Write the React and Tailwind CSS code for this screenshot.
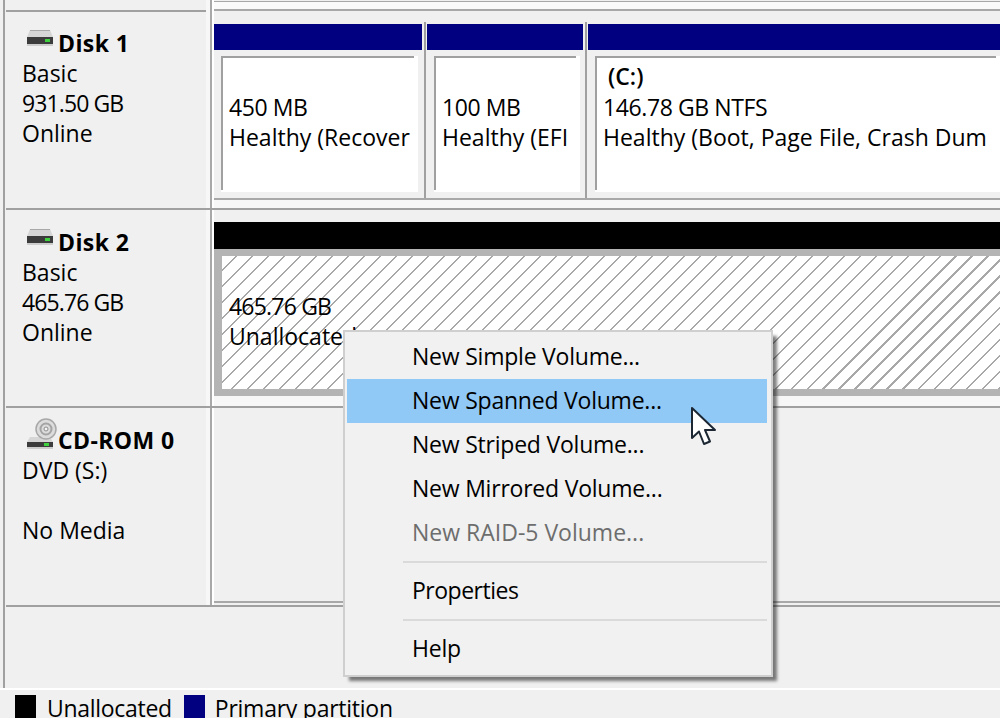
const font = { fontFamily: '"Open Sans", "Noto Sans", sans-serif' };

function DiskIcon() {
  return (
    <svg width="26" height="18" viewBox="0 0 26 18" className="shrink-0 -mt-[10px] blur-[0.4px]">
      <path d="M3 1h20l3 7H0z" fill="#d6d6d6" />
      <rect x="3" y="1" width="20" height="1" fill="#a8a8a8" />
      <rect x="0" y="8" width="26" height="7" fill="#3c3c3c" />
      <rect x="0" y="15" width="26" height="2" fill="#cdcdcd" />
      <rect x="18" y="10" width="5" height="3" fill="#3fd03f" />
    </svg>
  );
}

function CdIcon() {
  return (
    <svg width="30" height="32" viewBox="0 0 30 32" className="shrink-0 -mt-[12px] -mr-[4px] blur-[0.4px]">
      <path d="M3 19h20l3 5H0z" fill="#d6d6d6" />
      <circle cx="19" cy="11" r="10" fill="#dcdcdc" stroke="#a8a8a8" strokeWidth="1.5" />
      <circle cx="19" cy="11" r="5.5" fill="none" stroke="#a4a4a4" strokeWidth="2" />
      <circle cx="19" cy="11" r="2" fill="#f4f4f4" stroke="#8c8c8c" />
      <rect x="0" y="24" width="26" height="5" fill="#3c3c3c" />
      <rect x="0" y="29" width="26" height="2" fill="#cdcdcd" />
      <rect x="17" y="25" width="5" height="3" fill="#3fd03f" />
    </svg>
  );
}

function DiskLabel({ icon, name, lines, top }) {
  return (
    <div className={`w-[200px] pl-[16px] ${top} text-[23px] leading-[30px] text-black`}>
      <div className="flex items-center font-bold h-[30px] pl-[5px] tracking-[0.4px] whitespace-nowrap">
        {icon}
        <span className="ml-[5px]">{name}</span>
      </div>
      {lines.map((l, i) => (
        <div key={i} className={`h-[30px] whitespace-nowrap ${/\d/.test(l) ? "tracking-[-0.9px]" : ""}`}>{l}</div>
      ))}
    </div>
  );
}

function Gutter() {
  return (
    <div className="w-[8px] pl-[4px] bg-[#f7f7f7]">
      <div className="h-full border-l-2 border-[#a8a8a8] bg-white" />
    </div>
  );
}

function Partition({ w, label, size, status, right }) {
  return (
    <div className={`${w} h-full flex flex-col`}>
      <div className="h-[26px] bg-[#000080]" />
      <div className={`flex-1 pt-[6px] pl-[7px] ${right} pb-[6px] bg-[#f0f0f0]`}>
        <div className="h-full bg-white flex flex-col overflow-hidden whitespace-nowrap">
          <div className="h-[2px] mr-[4px] bg-[#a0a0a0] shrink-0" />
          <div className="flex-1 mb-[2px] border-l-2 border-[#a0a0a0] pl-[6px]">
            <div className="h-[34px] pt-[3px] pl-[5px] font-semibold leading-[30px]">{label}</div>
            <div className="leading-[30px] tracking-[-0.4px]">{size}</div>
            <div className="leading-[30px]">{status}</div>
          </div>
        </div>
      </div>
    </div>
  );
}

function PartSep() {
  return (
    <div className="w-[5px] flex justify-center -mt-[2px] bg-[#f0f0f0]">
      <div className="w-[2px] bg-[#a0a0a0]" />
    </div>
  );
}

function MenuItem({ children, active, disabled }) {
  return (
    <div
      className={`h-[44px] flex items-center pb-[2px] pl-[65px] ml-[2px] mr-[4px] whitespace-nowrap ${
        active ? "bg-[#90c8f6]" : ""
      } ${disabled ? "text-[#6d6d6d]" : "text-black tracking-[-0.22px]"}`}
    >
      {children}
    </div>
  );
}

function Sep() {
  return <div className="h-[2px] my-[6px] ml-[58px] mr-[4px] bg-[#dadada]" />;
}

export default function App() {
  return (
    <div style={font} className="relative w-[1000px] h-[718px] overflow-hidden bg-[#f0f0f0] text-[23px] text-black">
      <div className="h-[688px] ml-[3px] border-l-2 border-[#a0a0a0] pl-px flex flex-col">
        <div className="h-[12px] flex shrink-0">
          <div className="w-[200px] border-b-2 border-[#a0a0a0]" />
          <Gutter />
          <div className="flex-1 h-[10px] mt-px border-y border-b-2 border-[#a8a8a8] bg-[#fafafa]" />
        </div>

        <div className="h-[198px] flex border-b-2 border-[#a0a0a0]">
          <DiskLabel top="pt-[16px]" icon={<DiskIcon />} name="Disk 1" lines={["Basic", "931.50 GB", "Online"]} />
          <Gutter />
          <div className="flex-1 flex flex-col">
            <div className="h-[186px] pt-[12px] flex">
              <Partition w="w-[208px]" right="pr-[4px]" label="" size="450 MB" status="Healthy (Recover" />
              <PartSep />
              <Partition w="w-[156px]" right="pr-[3px]" label="" size="100 MB" status="Healthy (EFI" />
              <PartSep />
              <Partition w="flex-1" right="pr-0" label="(C:)" size="146.78 GB NTFS" status="Healthy (Boot, Page File, Crash Dum" />
            </div>
            <div className="flex-1 border-t-2 border-[#a8a8a8] bg-[#f7f7f7]" />
          </div>
        </div>

        <div className="h-[198px] flex border-b-2 border-[#a0a0a0]">
          <DiskLabel top="pt-[17px]" icon={<DiskIcon />} name="Disk 2" lines={["Basic", "465.76 GB", "Online"]} />
          <Gutter />
          <div className="flex-1 flex flex-col">
            <div className="h-[186px] pt-[12px] flex flex-col">
              <div className="h-[27px] bg-black" />
              <div className="flex-1 border-y-[7px] border-l-[8px] border-[#b4b4b4] bg-[repeating-linear-gradient(135deg,#fff_0,#fff_9.8px,#a8a8a8_9.8px,#a8a8a8_11.3px)] pl-[7px] pt-[35px] leading-[30px] whitespace-nowrap">
                <div className="tracking-[-0.8px]">465.76 GB</div>
                <div>Unallocated</div>
              </div>
            </div>
            <div className="flex-1 bg-[#f7f7f7]" />
          </div>
        </div>

        <div className="h-[199px] flex border-b-2 border-[#a0a0a0]">
          <DiskLabel top="pt-[17px]" icon={<CdIcon />} name="CD-ROM 0" lines={["DVD (S:)", "", "No Media"]} />
          <Gutter />
          <div className="flex-1 mb-[2px] border-b-2 border-[#a8a8a8]" />
        </div>
      </div>

      <div className="border-t-2 border-white h-[30px] pl-[15px] pt-[5px] flex items-start">
        <div className="w-[21px] h-[24px] bg-black shrink-0" />
        <span className="ml-[11px] leading-[26px] tracking-[-0.3px]">Unallocated</span>
        <div className="w-[21px] h-[24px] bg-[#000080] ml-[12px] shrink-0" />
        <span className="ml-[10px] leading-[26px] tracking-[-0.25px]">Primary partition</span>
      </div>

      <div className="absolute left-[343px] top-[330px] w-[430px] h-[347px] bg-[#f1f1f1] border-2 border-[#cfcfcf] shadow-[5px_5px_3px_-1px_rgba(0,0,0,0.5)] pt-[3px]">
        <MenuItem>New Simple Volume...</MenuItem>
        <MenuItem active>New Spanned Volume...</MenuItem>
        <MenuItem>New Striped Volume...</MenuItem>
        <MenuItem>New Mirrored Volume...</MenuItem>
        <MenuItem disabled>New RAID-5 Volume...</MenuItem>
        <Sep />
        <MenuItem><span className="tracking-[-0.5px]">Properties</span></MenuItem>
        <Sep />
        <MenuItem>Help</MenuItem>
      </div>

      <svg width="28" height="42" viewBox="0 0 28 42" className="absolute left-[690px] top-[406px]">
        <path d="M2 2v30l7-6.5 5 12.5 6-2.5-5-11.5h10z" fill="#fff" stroke="#1c2733" strokeWidth="2" strokeLinejoin="round" />
      </svg>
    </div>
  );
}
